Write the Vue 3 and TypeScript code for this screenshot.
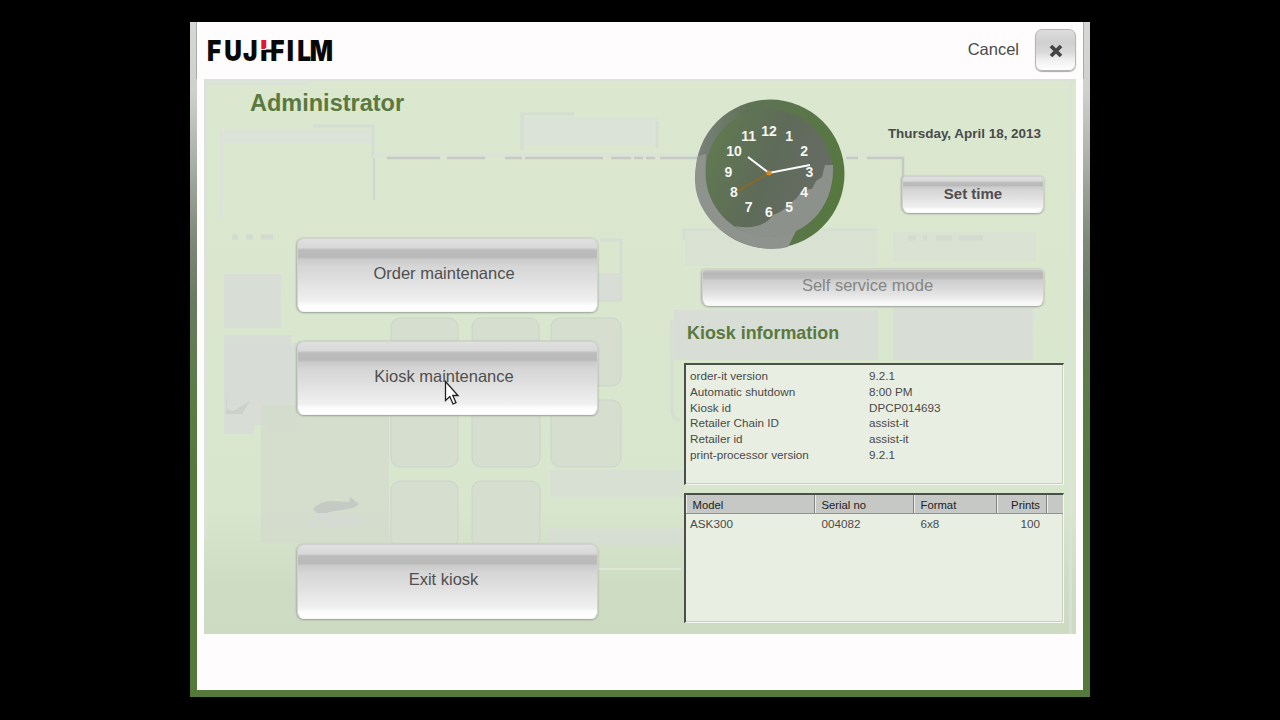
<script setup lang="ts">
interface Pair { label: string; value: string }
interface Mark { n: number; x: number; y: number }

const info: Pair[] = [
  { label: 'order-it version', value: '9.2.1' },
  { label: 'Automatic shutdown', value: '8:00 PM' },
  { label: 'Kiosk id', value: 'DPCP014693' },
  { label: 'Retailer Chain ID', value: 'assist-it' },
  { label: 'Retailer id', value: 'assist-it' },
  { label: 'print-processor version', value: '9.2.1' },
]
const columns: string[] = ['Model', 'Serial no', 'Format', 'Prints', '']
const printer: string[] = ['ASK300', '004082', '6x8', '100', '']

const marks: Mark[] = Array.from({ length: 12 }, (_, i) => {
  const a = ((i + 1) * Math.PI) / 6
  return { n: i + 1, x: 74 + 40.5 * Math.sin(a), y: 77.5 - 40.5 * Math.cos(a) }
})
</script>

<template>
  <div class="stage">
    <div class="window">
      <header class="top">
        <svg class="logo" width="134" height="32" viewBox="-3 -2 134 32">
          <defs>
            <linearGradient id="split" gradientUnits="userSpaceOnUse" x1="60" y1="3" x2="61.500" y2="24">
              <stop offset="0" stop-color="#e2182f" />
              <stop offset=".42" stop-color="#e2182f" />
              <stop offset=".42" stop-color="#fefcfd" />
              <stop offset=".5" stop-color="#fefcfd" />
              <stop offset=".5" stop-color="#080808" />
            </linearGradient>
          </defs>
          <text x="-1.300 18.700 40.200 60 71.500 90.500 102.500 117" y="24" class="logo-text" transform="scale(.87 1)">FUJ<tspan fill="url(#split)">I</tspan>FILM</text>
          <path d="M53.800 15.500l4.500-3h7v3z" fill="#080808" />
        </svg>
        <div class="cancel">
          <span>Cancel</span>
          <button class="btn close" aria-label="Cancel">
            <svg width="14" height="14" viewBox="0 0 14 14">
              <path d="M2 2l10 10M12 2l-10 10" stroke="#444" stroke-width="3.800" />
            </svg>
          </button>
        </div>
      </header>

      <main class="panel">
        <svg class="traces" width="872" height="555" viewBox="204 79 872 555">
          <g fill="#dce2dd" opacity=".72">
            <path d="M204 79h872v3H310v3H204z" />
            <path d="M224 129h150v14H224zM524 117h134v28H524z" />
            <path d="M204 79h3v460h-3zM220 130h3v90h-3zM1069 84h3v550h-3z" />
            <path d="M376 153h322v4H376zM846 153h58v4h-58z" />
          </g>
          <g fill="#d7dbd7">
            <path d="M224 274h57v54h-57zM224 335h67v70h-67zM597 273h24v29h-24z" opacity=".9" />
            <path d="M224 343h73v90h-30v-8h-13v9h-30z" opacity=".75" />
            <path d="M685 232h192v34H685zM893 232h143v30H893z" opacity=".45" />
            <path d="M674 310h204v50H674zM893 308h140v52H893z" opacity=".8" />
            <path d="M550 470h134v27H550zM550 528h134v18H550z" opacity=".6" />
          </g>
          <path d="M261 405h36v10h92v128H261z" fill="#d4dccd" opacity=".85" />
          <g fill="#d5decf" stroke="#cdd4ca" stroke-width="1">
            <rect x="391" y="318" width="67" height="48" rx="9" />
            <rect x="472" y="318" width="67" height="48" rx="9" />
            <rect x="551" y="318" width="70" height="68" rx="9" />
            <rect x="391" y="400" width="67" height="67" rx="9" />
            <rect x="472" y="400" width="68" height="67" rx="9" />
            <rect x="551" y="400" width="70" height="67" rx="9" />
            <rect x="391" y="481" width="67" height="67" rx="9" />
            <rect x="472" y="481" width="68" height="67" rx="9" />
          </g>
          <path d="M387 158h53m7 0h38m20 0h17m3 0h78m8 0h20m3 0h9m3 0h9m5 0h47M846 158h12m9 0h36v28" class="rail" />
          <path d="M374 158v42" stroke="#d0d6cd" stroke-width="2" />
          <path d="M373 157v-31h-60M522 150v-36h52M657 148v-27" class="faint" />
          <path d="M600 240h21v60h-24M684 240v-10h193M672 320v90q0 8 8 11" class="faint" />
          <path d="M313 509q8-9 21-8l15 1 1-5 9 7-5 4-25 4-9 4z" fill="#c5cac4" />
          <path d="M313 513h49v14h-53z" fill="#d5dad3" />
          <path d="M227 387v22l6 2 17-10-8 13h-16z" fill="#cbd2ca" />
          <path d="M597 569h84" stroke="#dde6d7" stroke-width="2" />
          <path d="M908 238h8m7 0h4m9 0h16m7 0h24M232 237h6m8 0h7m8 0h12" stroke="#d3dad0" stroke-width="5" />
        </svg>

        <section class="left">
          <h1>Administrator</h1>
          <button class="btn big">Order maintenance</button>
          <button class="btn big second">Kiosk maintenance</button>
          <button class="btn big exit">Exit kiosk</button>
        </section>

        <section class="right">
          <div class="time-row">
            <svg class="clock" width="150" height="150" viewBox="0 0 150 150">
              <defs>
                <linearGradient id="rim" x1="0" y1=".3" x2="1" y2=".45">
                  <stop offset="0" stop-color="#7c817b" />
                  <stop offset=".3" stop-color="#5f7257" />
                  <stop offset="1" stop-color="#56783f" />
                </linearGradient>
                <linearGradient id="face" x1="0" y1=".2" x2="1" y2=".6">
                  <stop offset="0" stop-color="#617b50" />
                  <stop offset=".5" stop-color="#5e6b59" />
                  <stop offset="1" stop-color="#686c66" />
                </linearGradient>
              </defs>
              <circle cx="75" cy="75" r="74.500" fill="url(#rim)" />
              <path d="M3 57l8-2c-2 28 5 53 28 71 22 16 48 10 66-2l-12 24C51 159-9 122 1 68z" fill="#8f938e" />
              <circle cx="74" cy="74" r="63.500" fill="url(#face)" />
              <path d="M138 66c2 42-27 72-64 72-14 0-25-4-34-11 14 3 30 1 38-11 9-3 14-8 20-14 5-3 7-8 9-11l10-1 4-8 6-4 3-12h8z" fill="#8d918c" />
              <text v-for="m in marks" :key="m.n" :x="m.x" :y="m.y" class="mark">{{ m.n }}</text>
              <path d="M74 74L43 92" stroke="#8b6926" stroke-width="2" />
              <path d="M53 58L74 74L115 66" fill="none" stroke="#fff" stroke-width="2" />
              <circle cx="74" cy="74" r="2.500" fill="#d78820" />
            </svg>
            <div class="date-col">
              <div class="date">Thursday, April 18, 2013</div>
              <button class="btn set">Set time</button>
            </div>
          </div>
          <button class="btn self">Self service mode</button>
          <h2>Kiosk information</h2>
          <dl class="box info">
            <div v-for="row in info" :key="row.label" class="pair">
              <dt>{{ row.label }}</dt>
              <dd>{{ row.value }}</dd>
            </div>
          </dl>
          <div class="box printers">
            <div class="grid head">
              <span v-for="c in columns" :key="c">{{ c }}</span>
            </div>
            <div class="grid body">
              <span v-for="c in printer" :key="c">{{ c }}</span>
            </div>
          </div>
        </section>
      </main>
    </div>
    <svg class="pointer" width="16" height="26" viewBox="0 0 16 26">
      <path d="M1.500 1.500v19l4.300-4 3.200 7.500 3-1.300-3.200-7.200h5.200z" fill="#fff" stroke="#222" stroke-width="1.300" />
    </svg>
  </div>
</template>

<style>
body { background: #000; overflow: hidden; }
</style>

<style scoped>
* { box-sizing: border-box; }
.stage {
  position: relative;
  width: 1280px;
  height: 720px;
  padding: 22px 190px 23px;
  background: #000;
  font-family: "Liberation Sans", Arial, sans-serif;
  color: #4a4a4a;
}
.window {
  height: 675px;
  padding: 0 7px 7px;
  background: linear-gradient(#d5d7d4 0, #cdd1cb 70px, #a9b0a6 140px, #7d8877 220px, #687b60 280px, #5b7d47 370px, #54793a 460px, #54793a 100%);
}
.top {
  display: flex;
  justify-content: space-between;
  height: 57px;
  padding: 7px 7px 0 8px;
  background: #fefcfd;
  box-shadow: -1px 0 #a9aaa9, 1px 0 #a9aaa9;
}
.logo { margin-top: 6px; overflow: visible; }
.logo-text { font: 900 28px Inter, "Liberation Sans", sans-serif; fill: #080808; }
.cancel { display: flex; gap: 16px; font-size: 16.5px; }
.cancel span { margin-top: 11px; line-height: 19px; }
.btn {
  display: flex;
  align-items: center;
  justify-content: center;
  margin: 0;
  border: 1px solid #d0d2d0;
  border-bottom-color: #f6f6f6;
  border-radius: 7px;
  background: linear-gradient(#e0e0e0 0%, #d8d8d8 12%, #bdbdbd 15%, #b9b9b9 25%, #cacaca 28%, #d6d6d6 38%, #dedede 55%, #e7e7e7 70%, #f0f0f0 86%, #fdfdfd 92%, #fff 100%);
  box-shadow: 0 1px 2px #9aa298, -1px 0 2px #b8beb5;
  color: #4f4f4f;
  font-family: inherit;
  font-size: 16.5px;
}
.close { width: 41px; height: 42px; padding: 1px 0 0; border-color: #b6b6b6; background: linear-gradient(#dedede 0%, #d0d0d0 30%, #d9d9d9 55%, #f0f0f0 75%, #fff 100%); box-shadow: 0 1px 1px #aaa; }
.panel {
  position: relative;
  display: grid;
  grid-template-columns: 480px 380px 12px;
  height: 611px;
  border: solid #fefcfd;
  border-width: 0 7px 56px;
  background: linear-gradient(#dbe7cf 0, #d9e6ce 430px, #cedcc4 510px, #cddbc3 100%);
}
.traces { position: absolute; inset: 0; }
.rail { fill: none; stroke: #c5cbc3; stroke-width: 2.500; }
.faint { fill: none; stroke: #d5dbd5; stroke-width: 3; opacity: .8; }
.left, .right { position: relative; }
.left { padding-left: 93px; }
h1, h2 { margin: 0; color: #5a793e; font-weight: bold; }
h1 { height: 149px; margin-left: -47px; padding-top: 11px; font-size: 23.5px; line-height: 27px; }
.big { width: 301px; height: 74px; margin-top: 10px; padding: 0 7px 4px 0; }
.second { margin-top: 29px; }
.exit { margin-top: 129px; height: 75px; padding-right: 8px; }
.time-row { display: flex; justify-content: space-between; height: 170px; padding: 20px 20px 0 11px; }
.date-col { display: flex; flex-direction: column; align-items: flex-end; }
.date { margin-top: 27px; padding-right: 3px; font-size: 13.450px; font-weight: bold; line-height: 16px; white-space: nowrap; }
.set { width: 142px; height: 37px; margin-top: 34px; font-size: 15px; font-weight: bold; padding-bottom: 3px; }
.self { width: 342px; height: 37px; margin: 20px 0 0 18px; padding: 0 11px 5px 0; color: #858585; }
.set, .self { border-radius: 4px 4px 7px 7px; }
.self { background: linear-gradient(#c9c9c9 0, #b7b7b7 9%, #bcbcbc 23%, #cecece 30%, #d8d8d8 50%, #e5e5e5 72%, #f9f9f9 94%); }
h2 { margin: 17px 0 20px 3px; font-size: 17.900px; line-height: 20px; }
.box {
  margin: 0;
  border: 2px solid #4a4f48;
  border-right: 1px solid #f5f7f1;
  border-bottom: 1px solid #f5f7f1;
  background: #e8eee1;
  box-shadow: inset -1px -1px #c9cec5;
  font-size: 11.700px;
}
.info { height: 122px; padding: 3px 4px; }
.pair { display: flex; height: 15.800px; line-height: 16px; }
dt { width: 179px; }
dd { margin: 0; }
.printers { height: 130px; margin-top: 8px; }
.grid { display: grid; grid-template-columns: 129px 99px 83px 50px 1fr; }
.grid span:nth-child(4) { text-align: right; }
.head { height: 19px; background: #c5c8c4; color: #222; border-bottom: 1px solid #8f938e; line-height: 21px; font-size: 11.300px; }
.head span { height: 18px; padding: 0 6px 0 5.500px; border-left: 1px solid #eee; border-right: 1px solid #81857f; }
.head span:last-child { border-right: 0; }
.body { line-height: 20px; }
.body span { padding: 0 7px 0 6.500px; }
.body span:first-child { padding-left: 4px; }
.mark { fill: #f5f5f2; font-size: 14px; font-weight: bold; text-anchor: middle; }
.pointer { position: absolute; left: 444px; top: 380px; }
</style>
